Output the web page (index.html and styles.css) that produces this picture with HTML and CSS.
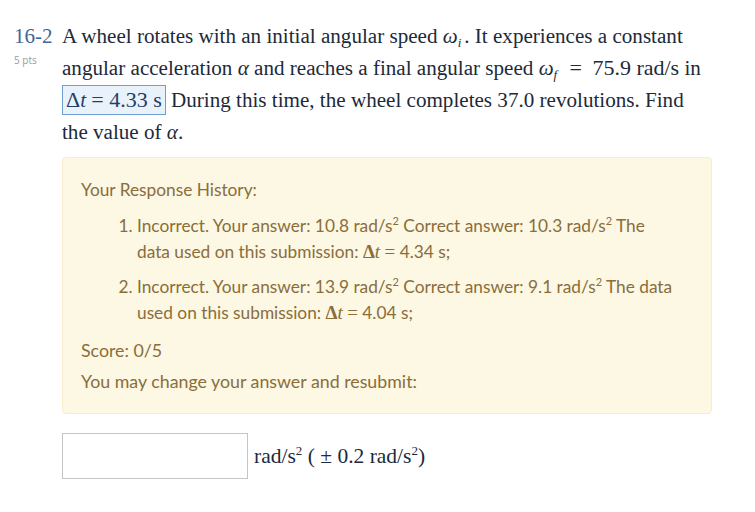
FILE: index.html
```html
<!DOCTYPE html>
<html lang="en">
<head>
    <meta charset="UTF-8">
    <title>16-2</title>
    <link rel="stylesheet" href="styles.css">
</head>
<body>
    <div class="question">
        <div class="qhead">
            <div class="qnum">16-2</div>
            <div class="pts">5 pts</div>
        </div>
        <div class="qbody">
            <p class="qtext">A wheel rotates with an initial angular speed <span class="m">ω<sub>i</sub></span>. It experiences a constant angular acceleration <span class="m">α</span> and reaches a final angular speed <span class="m">ω<sub>f</sub></span> <span class="mn"><span class="eq">=</span> 75.9 rad/s</span> in <span class="given"><span class="mr">Δ</span><span class="m">t</span> <span class="mn">= 4.33 s</span></span> During this time, the wheel completes 37.0 revolutions. Find the value of <span class="m">α</span>.</p>

            <div class="history">
                <div class="h-title">Your Response History:</div>
                <ol class="h-list">
                    <li>Incorrect. Your answer: 10.8 rad/s<sup>2</sup> Correct answer: 10.3 rad/s<sup>2</sup> The data used on this submission: <span class="hm"><b>Δ</b><i>t</i></span> <span class="hm">=</span> 4.34 s;</li>
                    <li>Incorrect. Your answer: 13.9 rad/s<sup>2</sup> Correct answer: 9.1 rad/s<sup>2</sup> The data used on this submission: <span class="hm"><b>Δ</b><i>t</i></span> <span class="hm">=</span> 4.04 s;</li>
                </ol>
                <div class="h-line">Score: 0/5</div>
                <div class="h-line">You may change your answer and resubmit:</div>
            </div>

            <div class="answer">
                <input class="ans-input" type="text">
                <span class="units">rad/s<sup>2</sup> ( ± 0.2 rad/s<sup>2</sup>)</span>
            </div>
        </div>
    </div>
</body>
</html>
```

FILE: styles.css
```css
body {
    margin: 0;
    background: #ffffff;
    font-family: "Liberation Serif", serif;
    color: #1c2a3a;
}

.question {
    display: flex;
    padding: 20px 0 0 14px;
}

.qhead {
    width: 48px;
    flex-shrink: 0;
}

.qnum {
    font-size: 21px;
    line-height: 32px;
    color: #3d6796;
}

.pts {
    font-family: "Open Sans", sans-serif;
    font-size: 10px;
    color: #9a9a9a;
    margin-top: 1px;
}

.qbody {
    width: 650px;
}

.qtext {
    margin: 0;
    font-size: 21.1px;
    line-height: 32px;
    width: 648px;
}

.m {
    font-style: italic;
}

.m sub {
    font-size: 13px;
    line-height: 0;
    vertical-align: -4px;
    margin-right: 3px;
}

.mr, .mn {
    font-size: 22px;
}

.eq {
    margin: 0 5px 0 4px;
}

.given {
    display: inline-block;
    line-height: 28px;
    padding: 0 3px;
    border: 1px solid #6d9fd1;
    background: #e9f2fb;
    color: #1f3e66;
}

.history {
    margin-top: 9px;
    padding: 18px 18px 16px;
    background: #fcf8e3;
    border: 1px solid #f8ecca;
    border-radius: 4px;
    color: #8a6d3b;
    font-family: Lato, sans-serif;
    font-size: 17.3px;
}

.h-title {
    line-height: 28px;
}

.h-list {
    margin: 9px 0 7px;
    padding: 0 15px 0 56px;
    line-height: 26px;
}

.h-list li {
    margin-bottom: 9px;
}

.h-list sup {
    font-size: 11px;
    line-height: 0;
}

.hm {
    font-family: "Liberation Serif", serif;
    font-size: 19px;
}

.h-line {
    line-height: 31px;
    font-size: 17.8px;
}

.answer {
    display: flex;
    align-items: center;
    margin-top: 19px;
}

.ans-input {
    width: 186px;
    height: 46px;
    box-sizing: border-box;
    border: 1px solid #c4c4c4;
    margin: 0 6px 0 0;
}

.units {
    font-size: 21.5px;
}

.units sup {
    font-size: 13px;
    line-height: 0;
}
```
